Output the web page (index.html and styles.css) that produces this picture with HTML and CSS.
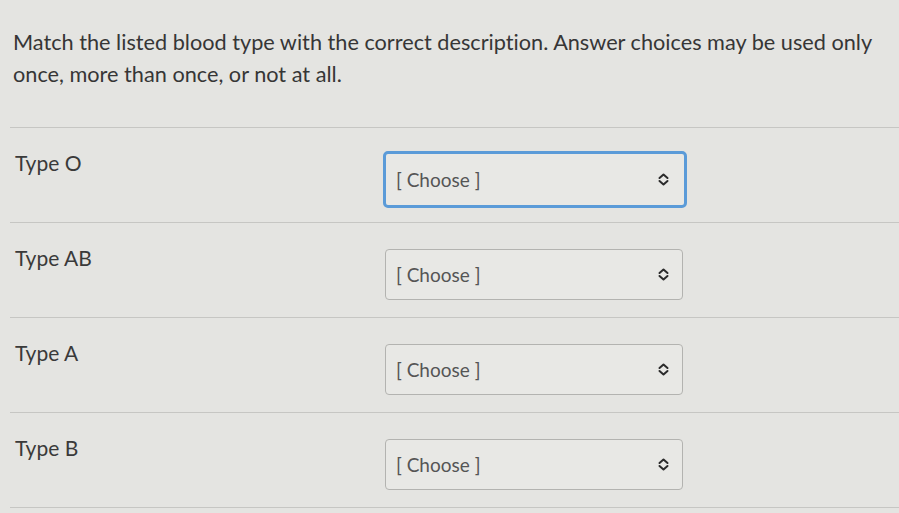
FILE: index.html
```html
<!DOCTYPE html>
<html>
<head>
<meta charset="utf-8">
<link rel="stylesheet" href="styles.css">
</head>
<body>
<div class="page">
  <p class="question">Match the listed blood type with the correct description. Answer choices may be used only once, more than once, or not at all.</p>
  <div class="rows">
    <div class="row">
      <div class="label">Type O</div>
      <div class="select focused"><span class="value">[ Choose ]</span>
        <svg class="chev" viewBox="0 0 11 13" width="11" height="13"><path d="M1.5 5 L5.5 1.5 L9.5 5 M1.5 8 L5.5 11.5 L9.5 8" fill="none" stroke="#2b2b2b" stroke-width="2" stroke-linecap="round" stroke-linejoin="round"/></svg>
      </div>
    </div>
    <div class="row">
      <div class="label">Type AB</div>
      <div class="select"><span class="value">[ Choose ]</span>
        <svg class="chev" viewBox="0 0 11 13" width="11" height="13"><path d="M1.5 5 L5.5 1.5 L9.5 5 M1.5 8 L5.5 11.5 L9.5 8" fill="none" stroke="#2b2b2b" stroke-width="2" stroke-linecap="round" stroke-linejoin="round"/></svg>
      </div>
    </div>
    <div class="row">
      <div class="label">Type A</div>
      <div class="select"><span class="value">[ Choose ]</span>
        <svg class="chev" viewBox="0 0 11 13" width="11" height="13"><path d="M1.5 5 L5.5 1.5 L9.5 5 M1.5 8 L5.5 11.5 L9.5 8" fill="none" stroke="#2b2b2b" stroke-width="2" stroke-linecap="round" stroke-linejoin="round"/></svg>
      </div>
    </div>
    <div class="row">
      <div class="label">Type B</div>
      <div class="select"><span class="value">[ Choose ]</span>
        <svg class="chev" viewBox="0 0 11 13" width="11" height="13"><path d="M1.5 5 L5.5 1.5 L9.5 5 M1.5 8 L5.5 11.5 L9.5 8" fill="none" stroke="#2b2b2b" stroke-width="2" stroke-linecap="round" stroke-linejoin="round"/></svg>
      </div>
    </div>
  </div>
</div>
</body>
</html>
```
FILE: styles.css
```css
html, body {
  margin: 0;
  padding: 0;
  background: #e4e4e1;
}
body {
  font-family: Lato, "Open Sans", sans-serif;
  color: #2e2e2e;
  width: 899px;
  height: 513px;
  overflow: hidden;
}
.page {
  padding: 26px 0 0 13px;
}
.question {
  margin: 0;
  width: 884px;
  font-size: 21.7px;
  line-height: 32px;
  color: #363636;
  font-variant-ligatures: no-common-ligatures;
}
.rows {
  margin-top: 37px;
  margin-left: -3px;
  border-top: 1px solid #c6c6c3;
}
.row {
  display: flex;
  align-items: flex-start;
  height: 95px;
  border-bottom: 1px solid #c6c6c3;
  box-sizing: border-box;
  padding-top: 22px;
}
.label {
  width: 370px;
  padding-left: 5px;
  font-size: 21px;
  line-height: 26px;
  color: #3a3a3a;
}
.select {
  display: flex;
  align-items: center;
  justify-content: space-between;
  box-sizing: border-box;
  width: 298px;
  height: 51px;
  margin-top: 4px;
  padding: 0 13px 0 10px;
  border: 1px solid #b3b3b0;
  border-radius: 4px;
  background: #e8e8e5;
  font-size: 19px;
  color: #555;
}
.select.focused {
  width: 304px;
  height: 57px;
  margin-top: 1px;
  margin-left: -2px;
  padding: 0 15px 0 10px;
  border: 3px solid #5b9bd8;
  border-radius: 5px;
}
.chev {
  display: block;
}
```
